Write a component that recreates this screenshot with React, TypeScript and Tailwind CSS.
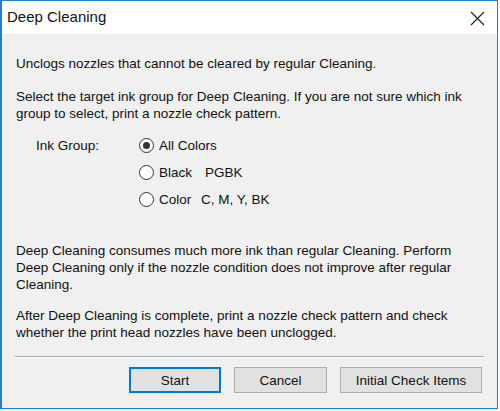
import React, { useState } from 'react';

const font = { fontFamily: '"Liberation Sans", Arial, sans-serif' };

const Radio = ({ checked, onClick, children }: { checked: boolean; onClick: () => void; children: React.ReactNode }) => (
  <label className="flex items-center h-[27px] cursor-default" onClick={onClick}>
    <span className="w-[15px] h-[15px] rounded-full border border-[#333] bg-white flex items-center justify-center shrink-0">
      {checked && <span className="w-[7px] h-[7px] rounded-full bg-[#333]" />}
    </span>
    <span className="ml-[5px] flex">{children}</span>
  </label>
);

export default function App() {
  const [group, setGroup] = useState('all');

  return (
    <div className="w-[500px] h-[411px] bg-white text-black" style={font}>
      <div className="w-[498px] h-[409px] border border-l-2 border-[#1b7fd6] bg-[#f0f0f0] flex flex-col">
        {/* Title bar */}
        <div className="h-[33px] bg-white flex items-center justify-between pl-[5px] pr-[12px] shrink-0">
          <span className="text-[15px] text-[#111]">Deep Cleaning</span>
          <svg width="15" height="15" viewBox="0 0 15 15" className="mt-[1px]">
            <path d="M1 1 L14 14 M14 1 L1 14" stroke="#222" strokeWidth="1.2" fill="none" />
          </svg>
        </div>

        <div className="flex-1 flex flex-col px-[14px] text-[13.5px] leading-[17px] text-[#111]">
          <p className="mt-[21px]">Unclogs nozzles that cannot be cleared by regular Cleaning.</p>
          <p className="mt-[16px]">
            Select the target ink group for Deep Cleaning. If you are not sure which ink group to select, print a nozzle check pattern.
          </p>

          <div className="flex mt-[10px] pl-[20px]">
            <div className="w-[103px] pt-[5px]">Ink Group:</div>
            <div className="flex flex-col">
              <Radio checked={group === 'all'} onClick={() => setGroup('all')}>All Colors</Radio>
              <Radio checked={group === 'black'} onClick={() => setGroup('black')}>
                <span className="w-[46px]">Black</span>
                <span>PGBK</span>
              </Radio>
              <Radio checked={group === 'color'} onClick={() => setGroup('color')}>
                <span className="w-[42px]">Color</span>
                <span>C, M, Y, BK</span>
              </Radio>
            </div>
          </div>

          <p className="mt-[29px] pr-[20px]">
            Deep Cleaning consumes much more ink than regular Cleaning. Perform Deep Cleaning only if the nozzle condition does not improve after regular Cleaning.
          </p>
          <p className="mt-[14px] pr-[20px]">
            After Deep Cleaning is complete, print a nozzle check pattern and check whether the print head nozzles have been unclogged.
          </p>

          <div className="mt-[15px] mx-[-1px] border-t border-[#a8a8a8] border-b border-b-white" />

          <div className="flex justify-end gap-[13px] mt-[9px] pr-[1px]">
            <button className="w-[92px] h-[26px] bg-[#e1e1e1] border-2 border-[#0078d7] text-[13.5px]">Start</button>
            <button className="w-[93px] h-[26px] bg-[#e1e1e1] border border-[#adadad] text-[13.5px]">Cancel</button>
            <button className="w-[142px] h-[26px] bg-[#e1e1e1] border border-[#adadad] text-[13.5px]">Initial Check Items</button>
          </div>
        </div>
      </div>
    </div>
  );
}
